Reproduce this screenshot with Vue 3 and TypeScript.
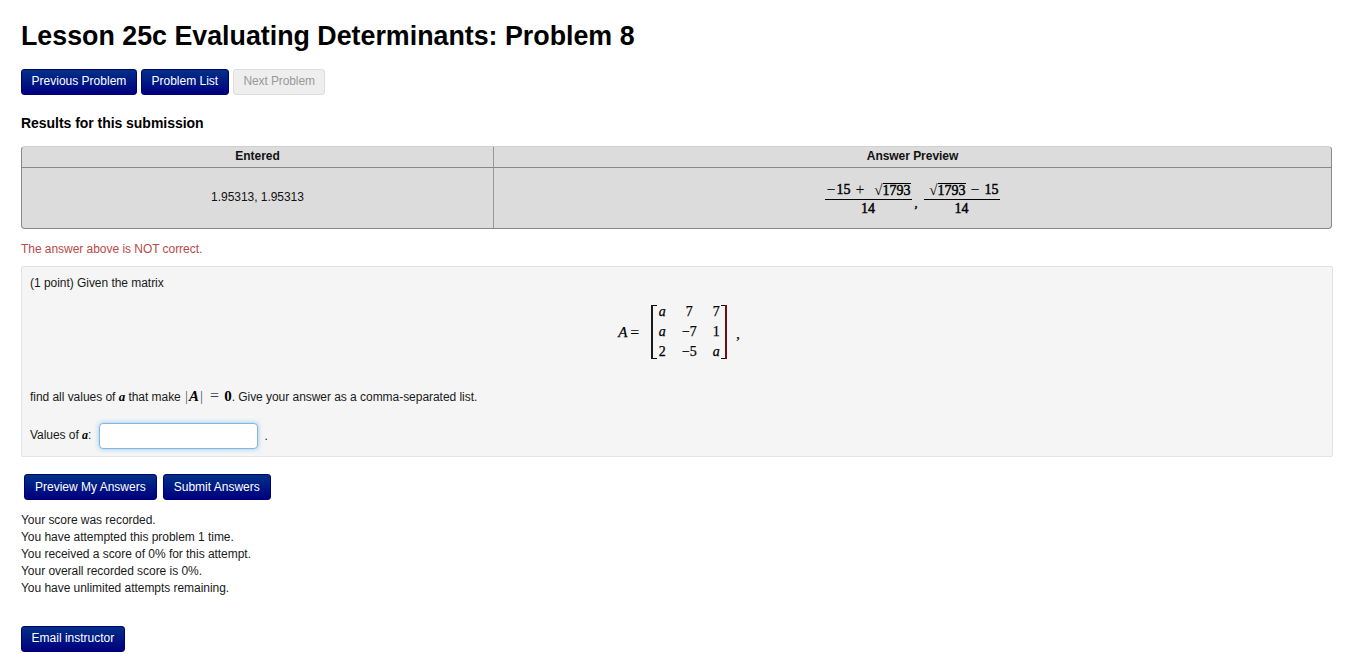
<script setup lang="ts">
const topNav = [
  { label: 'Previous Problem', disabled: false },
  { label: 'Problem List', disabled: false },
  { label: 'Next Problem', disabled: true },
]
const matrix: { v: string; it?: boolean }[] = [
  { v: 'a', it: true }, { v: '7' }, { v: '7' },
  { v: 'a', it: true }, { v: '−7' }, { v: '1' },
  { v: '2' }, { v: '−5' }, { v: 'a', it: true },
]
const scoreLines = [
  'Your score was recorded.',
  'You have attempted this problem 1 time.',
  'You received a score of 0% for this attempt.',
  'Your overall recorded score is 0%.',
  'You have unlimited attempts remaining.',
]
</script>

<template>
  <main class="page">
    <h1 class="title">Lesson 25c Evaluating Determinants: Problem 8</h1>

    <nav class="nav">
      <button v-for="b in topNav" :key="b.label" class="btn" :class="{ off: b.disabled }" :disabled="b.disabled">{{ b.label }}</button>
    </nav>

    <h2 class="results">Results for this submission</h2>

    <div class="table">
      <div class="cell head left">Entered</div>
      <div class="cell head">Answer Preview</div>
      <div class="cell body left">1.95313, 1.95313</div>
      <div class="cell body">
        <span class="math preview">
          <span class="frac">
            <span class="num"><span class="op">−</span>15<span class="op bin">+</span><span class="radical"><span class="rad-sign">√</span><span class="over">1793</span></span></span>
            <span class="den">14</span>
          </span>
          <span class="comma">,</span>
          <span class="frac">
            <span class="num"><span class="radical"><span class="rad-sign">√</span><span class="over">1793</span></span><span class="op bin">−</span>15</span>
            <span class="den">14</span>
          </span>
        </span>
      </div>
    </div>

    <p class="wrong">The answer above is NOT correct.</p>

    <section class="problem">
      <p class="given">(1 point) Given the matrix</p>
      <div class="display math">
        <i class="var">A</i><span class="eq">=</span>
        <span class="matrix">
          <span v-for="(c, i) in matrix" :key="i" :class="{ var: c.it }">{{ c.v }}</span>
        </span>
        <span class="tail">,</span>
      </div>
      <p class="find">find all values of <i class="math var">a</i> that make <span class="math abs"><span class="bar">|</span><i class="var">A</i><span class="bar">|</span><span class="abs-eq">=</span><b>0</b></span>. Give your answer as a comma-separated list.</p>
      <div class="answer">
        <label for="ans">Values of <i class="math var">a</i>:</label>
        <input id="ans" class="input" type="text" />
        <span class="dot">.</span>
      </div>
    </section>

    <div class="actions">
      <button class="btn">Preview My Answers</button>
      <button class="btn">Submit Answers</button>
    </div>

    <div class="score">
      <div v-for="l in scoreLines" :key="l">{{ l }}</div>
    </div>

    <button class="btn email">Email instructor</button>
  </main>
</template>

<style scoped>
.page {
  padding: 21px 29px 0 21px;
  font-family: "Liberation Sans", Arial, sans-serif;
  font-size: 12px;
  line-height: 17px;
  letter-spacing: -0.04px;
  color: #1a1a1a;
}
.title {
  margin: 0;
  font-size: 26.8px;
  line-height: 30px;
  font-weight: 700;
  letter-spacing: 0;
  color: #000;
}
.nav {
  display: flex;
  gap: 4px;
  margin-top: 18px;
}
.btn {
  height: 26px;
  padding: 0 9.6px 2px;
  border: 1px solid #00006e;
  border-radius: 3px;
  background: linear-gradient(#003087, #000080);
  color: #fff;
  font-family: inherit;
  font-size: 12px;
  letter-spacing: 0;
  line-height: 22px;
}
.btn.off {
  background: #eee;
  border-color: #ddd;
  color: #999;
  letter-spacing: -0.1px;
}
.results {
  margin: 20px 0 0;
  font-size: 14px;
  line-height: 17px;
  font-weight: 700;
  color: #000;
}
.table {
  display: grid;
  grid-template-columns: 472px 1fr;
  grid-template-rows: 21px 60px;
  margin-top: 14px;
  width: 1309px;
  background: #dcdcdc;
  border: 1px solid #888;
  border-top-color: #d0d0d0;
  border-radius: 4px;
  color: #111;
}
.cell {
  display: flex;
  align-items: center;
  justify-content: center;
}
.cell.left { border-right: 1px solid #999; }
.cell.head {
  padding-bottom: 2px;
  font-weight: 700;
  border-bottom: 1px solid #888;
}
.cell.body { padding-bottom: 1px; }
.math {
  font-family: "Liberation Serif", "Times New Roman", serif;
  letter-spacing: 0;
  color: #000;
}
.preview {
  display: inline-flex;
  align-items: center;
  margin-left: -1px;
  padding-top: 3px;
  font-size: 14px;
  line-height: 16px;
  -webkit-text-stroke: 0.45px #000;
}
.frac {
  display: inline-flex;
  flex-direction: column;
  align-items: center;
}
.num {
  display: inline-flex;
  align-items: flex-end;
  padding: 0 1px 1px;
  border-bottom: 1px solid #000;
  white-space: pre;
}
.op {
  display: inline-block;
  width: 11px;
  font-size: 16px;
  -webkit-text-stroke: 0;
  text-align: center;
}
.op.bin { margin: 0 4px; }
.den { padding-top: 1px; }
.comma { margin: 8px 6px 0 3px; font-size: 12px; }
.radical { display: inline-flex; align-items: flex-end; }
.rad-sign { width: 13px; font-size: 15px; text-align: right; -webkit-text-stroke: 0; }
.over { border-top: 1px solid #000; line-height: 14px; }
.wrong {
  margin: 12px 0 0;
  color: #b94a48;
}
.problem {
  margin-top: 8px;
  width: 1294px;
  height: 173px;
  padding: 8px;
  background: #f5f5f5;
  border: 1px solid #e3e3e3;
  border-radius: 2px;
}
.given { margin: 0; }
.display {
  display: flex;
  align-items: center;
  justify-content: center;
  margin: 13px 0 0;
  padding-left: 4px;
  font-size: 14px;
  height: 54px;
  -webkit-text-stroke: 0.25px #000;
}
.var { font-style: italic; font-weight: 700; }
.display .var { font-weight: 400; }
.display > .var { font-size: 15px; }
.eq { margin: 0 12px 0 3px; font-size: 16px; -webkit-text-stroke: 0; }
.matrix {
  display: grid;
  grid-template-columns: 18px 36px 18px;
  grid-auto-rows: 20px;
  align-content: center;
  justify-items: center;
  align-items: center;
  height: 54px;
  font-size: 14px;
  line-height: 20px;
  border-left: 2px solid #1a1a1a;
  border-right: 2px solid #6b1010;
  position: relative;
}
.matrix::before,
.matrix::after {
  content: "";
  position: absolute;
  top: 0;
  bottom: 0;
  width: 4px;
  border-top: 1px solid #000;
  border-bottom: 1px solid #000;
}
.matrix::before { left: 0; }
.matrix::after { right: 0; }
.tail { margin: 4px 0 0 9px; }
.find { margin: 28px 0 0; }
.find .math { font-size: 13px; }
.abs { font-size: 15px !important; }
.abs .bar { color: #555; margin: 0 1px; }
.abs .var { font-size: 15px; }
.abs-eq { margin: 0 5px 0 6px; font-size: 16px; color: #444; }
.abs b { font-size: 15px; }
.answer {
  display: flex;
  align-items: center;
  margin-top: 17px;
}
.answer label { margin-right: 8px; padding-bottom: 2px; }
.input {
  width: 159px;
  height: 26px;
  box-sizing: border-box;
  padding: 0 6px;
  background: #fff;
  border: 1px solid #7fb8e6;
  border-radius: 4px;
  box-shadow: 0 0 5px rgba(82, 168, 236, 0.6);
  outline: none;
}
.dot { margin-left: 6px; }
.actions {
  display: flex;
  gap: 6px;
  margin: 17px 0 0 3px;
}
.actions .btn { padding: 0 10px; }
.score { margin-top: 12px; }
.email { display: block; margin-top: 29px; }
</style>

<style>
html, body { margin: 0; background: #fff; }
</style>
